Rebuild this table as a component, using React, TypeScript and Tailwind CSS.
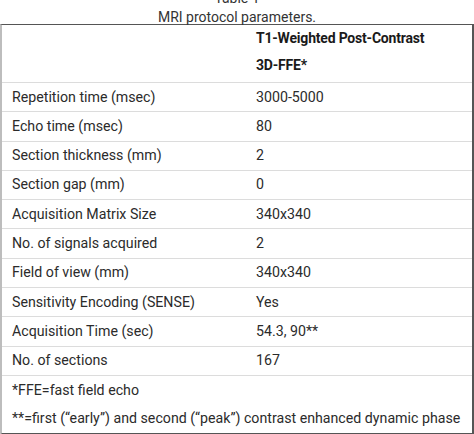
import React from 'react';

const rows: [string, string][] = [
  ['Repetition time (msec)', '3000-5000'],
  ['Echo time (msec)', '80'],
  ['Section thickness (mm)', '2'],
  ['Section gap (mm)', '0'],
  ['Acquisition Matrix Size', '340x340'],
  ['No. of signals acquired', '2'],
  ['Field of view (mm)', '340x340'],
  ['Sensitivity Encoding (SENSE)', 'Yes'],
  ['Acquisition Time (sec)', '54.3, 90**'],
  ['No. of sections', '167'],
];

const App: React.FC = () => {
  return (
    <div className="w-[474px] h-[434px] overflow-hidden bg-white text-[#2b2b2b] font-['Roboto',sans-serif]">
      {/* caption */}
      <div className="mt-[-11px] text-center text-[14px] leading-[19px] text-[#333]">
        <div>Table 1</div>
        <div>MRI protocol parameters.</div>
      </div>

      <div className="mt-[-3px] border-t border-t-[#555] border-l-2 border-l-[#bdbdbd] border-r-2 border-r-[#555] border-b-2 border-b-[#555] text-[14.2px]">
        {/* header */}
        <div className="grid grid-cols-[254px_1fr] h-[58px] border-b border-[#dcdcdc]">
          <div></div>
          <div className="font-bold text-[#1a1a1a] text-[14px] tracking-[-0.2px] leading-[27.4px]">
            <div>T1-Weighted Post-Contrast</div>
            <div>3D-FFE*</div>
          </div>
        </div>

        {rows.map(([label, value]) => (
          <div key={label} className="grid grid-cols-[254px_1fr] h-[29.3px] items-center border-b border-[#dcdcdc]">
            <div className="pl-[10px]">{label}</div>
            <div>{value}</div>
          </div>
        ))}

        {/* footnotes */}
        <div className="pl-[10px] leading-[28.5px]">
          <div>*FFE=fast field echo</div>
          <div>**=first (“early”) and second (“peak”) contrast enhanced dynamic phase</div>
        </div>
      </div>
    </div>
  );
};

export default App;
